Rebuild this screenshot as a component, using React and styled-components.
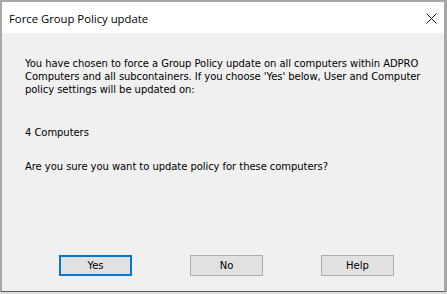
import React from "react";
import styled, { createGlobalStyle } from "styled-components";

const GlobalStyle = createGlobalStyle`
  html, body {
    margin: 0;
    padding: 0;
    background: #dcdcdc;
  }
`;

function CloseIcon() {
  return (
    <svg width="11" height="11" viewBox="0 0 11 11">
      <path d="M0.5 0.5 L10.5 10.5 M10.5 0.5 L0.5 10.5" stroke="#1a1a1a" strokeWidth="1" fill="none" />
    </svg>
  );
}

export default function App() {
  return (
    <>
      <GlobalStyle />
      <Window>
        <TitleBar>
          <Title>Force Group Policy update</Title>
          <CloseButton>
            <CloseIcon />
          </CloseButton>
        </TitleBar>
        <Body>
          <Message>
            <Para>
              You have chosen to force a Group Policy update on all computers within ADPRO
              <br />
              Computers and all subcontainers. If you choose 'Yes' below, User and Computer
              <br />
              policy settings will be updated on:
            </Para>
            <Para $gap={30}>4 Computers</Para>
            <Para $gap={21}>Are you sure you want to update policy for these computers?</Para>
          </Message>
          <ButtonRow>
            <Button $default>Yes</Button>
            <Button>No</Button>
            <Button>Help</Button>
          </ButtonRow>
        </Body>
      </Window>
    </>
  );
}

const Window = styled.div`
  box-sizing: border-box;
  width: 447px;
  height: 292px;
  display: flex;
  flex-direction: column;
  border-style: solid;
  border-color: #a7a7a7;
  border-width: 2px 3px 1px 2px;
  border-bottom-color: #5e5e5e;
  background: #f0f0f0;
`;

const TitleBar = styled.div`
  height: 31px;
  display: flex;
  align-items: center;
  justify-content: space-between;
  background: #ffffff;
  padding: 0 7px 0 7px;
`;

const Title = styled.div`
  font-family: "Open Sans", "Noto Sans", sans-serif;
  font-size: 11.3px;
  color: #000;
  margin-top: 1px;
`;

const CloseButton = styled.div`
  display: flex;
  align-items: center;
  margin-top: 1px;
`;

const Body = styled.div`
  flex: 1;
  display: flex;
  flex-direction: column;
  justify-content: space-between;
  padding: 24px 0 15px 23px;
`;

const Message = styled.div`
  font-family: "DejaVu Sans", Tahoma, sans-serif;
  font-size: 10px;
  line-height: 13px;
  letter-spacing: -0.06px;
  color: #000;
`;

const Para = styled.p`
  margin: ${(p) => p.$gap || 0}px 0 0 0;
`;

const ButtonRow = styled.div`
  display: flex;
  gap: 58px;
  padding-left: 34px;
`;

const Button = styled.div`
  box-sizing: border-box;
  width: 73px;
  height: 21px;
  display: flex;
  align-items: center;
  justify-content: center;
  background: #e1e1e1;
  border: ${(p) => (p.$default ? "2px solid #0078d7" : "1px solid #adadad")};
  font-family: "DejaVu Sans", Tahoma, sans-serif;
  font-size: 10px;
  color: #000;
`;
